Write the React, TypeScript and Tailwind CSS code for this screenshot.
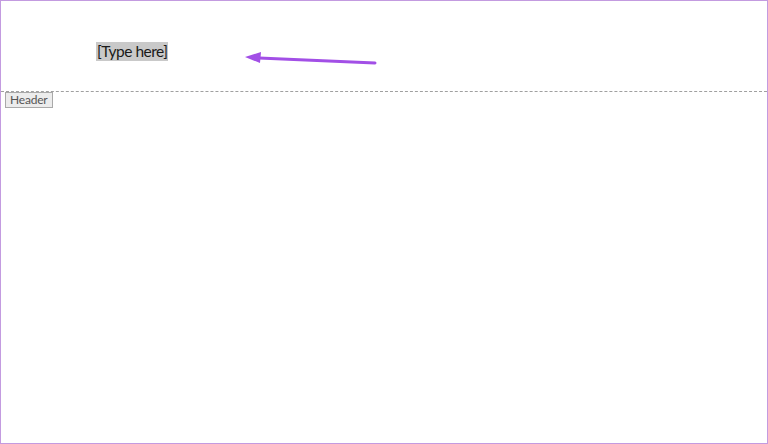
import React from "react";

export default function App() {
  return (
    <div className="relative w-[768px] h-[444px] bg-white border border-[#c39be0] overflow-hidden" style={{ fontFamily: "Lato, 'Open Sans', sans-serif" }}>
      <div className="h-[91px] border-b border-dashed border-[#a0a0a0] pl-[95px] pt-[41px] flex items-start">
        <span className="block bg-[#c9c9c9] text-[#1a1a1a] text-[15.5px] leading-[19px] tracking-[-0.5px] px-[1px]">[Type here]</span>
      </div>
      <div className="pl-[4px] flex items-start">
        <span className="block bg-[#ececec] border border-[#a9a9a9] text-[#555555] text-[12px] leading-[14px] tracking-[-0.2px] px-[4px] py-[0px]">Header</span>
      </div>
      <svg className="absolute left-0 top-0" width="768" height="444" viewBox="0 0 768 444">
        <line x1="374" y1="62" x2="258" y2="57" stroke="#a24fe6" strokeWidth="3" strokeLinecap="round" />
        <polygon points="244,56 260,51 259,62" fill="#a24fe6" />
      </svg>
    </div>
  );
}
